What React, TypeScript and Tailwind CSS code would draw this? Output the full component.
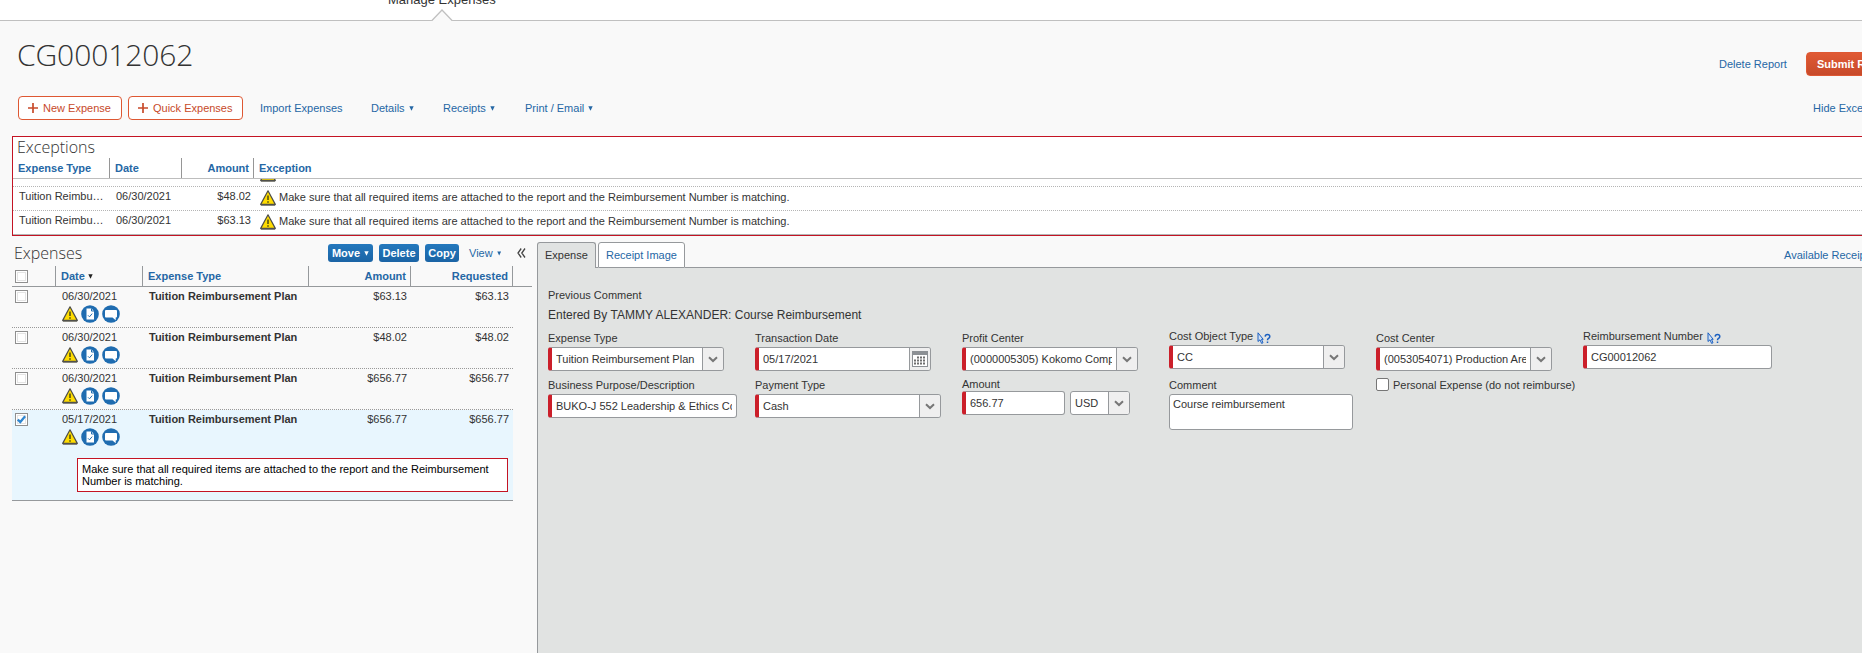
import type { ReactNode } from "react";

const expenses = [
    { id: 1, date: "06/30/2021", type: "Tuition Reimbursement Plan", amount: "$63.13", requested: "$63.13", checked: false },
    { id: 2, date: "06/30/2021", type: "Tuition Reimbursement Plan", amount: "$48.02", requested: "$48.02", checked: false },
    { id: 3, date: "06/30/2021", type: "Tuition Reimbursement Plan", amount: "$656.77", requested: "$656.77", checked: false },
    { id: 4, date: "05/17/2021", type: "Tuition Reimbursement Plan", amount: "$656.77", requested: "$656.77", checked: true },
]

const exceptions = [
    { id: 1, type: "Tuition Reimbu…", date: "06/30/2021", amount: "$48.02" },
    { id: 2, type: "Tuition Reimbu…", date: "06/30/2021", amount: "$63.13" },
]

const message = "Make sure that all required items are attached to the report and the Reimbursement Number is matching."

function WarningIcon() {
    return (
        <svg className="block h-4 w-4 shrink-0" viewBox="0 0 16 16">
            <path d="M8 .8 15.3 14.4H.7Z" fill="#ffdc00" stroke="#4d4d48" strokeWidth="1.2" strokeLinejoin="round" />
            <path d="M.8 15.4H15.2" stroke="#77776f" strokeWidth="1" />
            <path d="M8 5.5V10M8 11.2V12.8" stroke="#4a4a10" strokeWidth="1.5" />
        </svg>
    )
}

function ReceiptIcon() {
    return (
        <svg className="block h-[18px] w-[18px]" viewBox="0 0 18 18">
            <circle cx="9" cy="9" r="8.8" fill="#1f6cb0" />
            <path d="M5.5 3.5H10.5L13 6V14.5H5.5Z" fill="#fff" />
            <path d="M10.5 3.5V6H13" fill="none" stroke="#1f6cb0" strokeWidth="1" />
            <path d="M7 10.3 8.5 11.8 11.2 8.6" fill="none" stroke="#1f6cb0" strokeWidth="1" />
        </svg>
    )
}

function CommentIcon() {
    return (
        <svg className="block h-[18px] w-[18px]" viewBox="0 0 18 18">
            <circle cx="9" cy="9" r="8.8" fill="#1f6cb0" />
            <path d="M4 5H14Q15 5 15 6V11.5Q15 12.5 14 12.5H13.7V15.2L10.5 12.5H4Q3 12.5 3 11.5V6Q3 5 4 5Z" fill="#fff" />
        </svg>
    )
}

function HelpIcon() {
    return (
        <svg className="block h-3 w-[14px]" viewBox="0 0 14 12">
            <path d="M1 .8V9.5L3 7.8 4.6 11.4 6 10.8 4.5 7.3H6.2Z" fill="#cfe0f5" stroke="#1a5fc0" strokeWidth="1" />
            <path d="M8.2 4.6Q8.3 2.5 10.5 2.5T12.8 4.5Q12.8 5.6 11.6 6.3T10.5 8.2M10.5 9.4V11" fill="none" stroke="#1a5fc0" strokeWidth="1.5" />
        </svg>
    )
}

function CalendarIcon() {
    return (
        <svg className="block h-4 w-4" viewBox="0 0 16 16">
            <rect x=".5" y=".5" width="15" height="15" fill="#fff" stroke="#8c9094" />
            <rect x="1" y="1" width="14" height="3" fill="#8c9094" />
            <path d="M5 6.5H14M2 9.5H14M2 12.5H14" stroke="#6e6e6e" strokeWidth="2" strokeDasharray="2 1" />
        </svg>
    )
}

function Arrow({ className = "" }: { className?: string }) {
    return (
        <svg className={`block h-[5px] w-[5px] ${className}`} viewBox="0 0 5 5">
            <path d="M.3 .2H4.7L2.5 4.8Z" fill="currentColor" />
        </svg>
    )
}

function Chevron() {
    return (
        <svg className="block h-[7px] w-[10px]" viewBox="0 0 10 7">
            <path d="M1 1.2 5 5 9 1.2" fill="none" stroke="#777" strokeWidth="2" />
        </svg>
    )
}

function PlusIcon() {
    return (
        <svg className="block h-[10px] w-[10px]" viewBox="0 0 10 10">
            <path d="M5 0V10M0 5H10" stroke="currentColor" strokeWidth="1.7" />
        </svg>
    )
}

function Checkbox({ checked = false }: { checked?: boolean }) {
    return (
        <span className="flex h-[13px] w-[13px] items-center justify-center border border-[#8f8f8f] bg-white">
            <span className="flex h-[9px] w-[9px] items-center justify-center border border-[#e4e4e4]">
                {checked && (
                    <svg className="h-[9px] w-[9px] shrink-0" viewBox="0 0 9 9">
                        <path d="M.8 4.5 3.3 7 8.2 1.2" fill="none" stroke="#2f86d0" strokeWidth="2.4" />
                    </svg>
                )}
            </span>
        </span>
    )
}

type InputProps = { value: string; width: string; required?: boolean; button?: ReactNode }

function Input({ value, width, required = true, button }: InputProps) {
    return (
        <div className={`flex h-6 overflow-hidden rounded-[3px] border border-[#96999c] bg-white ${required ? "border-l-4 border-l-[#cb1f2a]" : ""} ${width}`}>
            <div className="mx-1 min-w-0 flex-1 overflow-hidden leading-[22px] whitespace-nowrap">{value}</div>
            {button && (
                <div className="flex w-[21px] shrink-0 items-center justify-center border-l border-[#96999c] bg-[#efefef]">{button}</div>
            )}
        </div>
    )
}

function Field({ label, help, children }: { label: string; help?: boolean; children: ReactNode }) {
    return (
        <div className={`w-[207px] shrink-0 ${help ? "-mt-0.5" : ""}`}>
            <div className="flex h-4 gap-1 leading-[14px]">
                {label}
                {help && <span className="pt-[3px]"><HelpIcon /></span>}
            </div>
            {children}
        </div>
    )
}

function Exceptions() {
    return (
        <section className="ml-3 h-[100px] overflow-hidden border border-r-0 border-[#c41424] bg-white">
            <h2 className="h-[21px] pl-1 font-['Open_Sans',sans-serif] text-base leading-[20px] font-light">Exceptions</h2>
            <div className="flex h-[21px] border-b border-[#bdbdbd] leading-[20px] font-bold text-[#2567a5]">
                <div className="w-[97px] border-r border-[#969696] pl-[5px]">Expense Type</div>
                <div className="w-[72px] border-r border-[#969696] pl-[5px]">Date</div>
                <div className="w-[72px] border-r border-[#969696] pr-1 text-right">Amount</div>
                <div className="pl-[5px]">Exception</div>
            </div>
            <div className="flex h-2 items-start overflow-hidden border-b border-dotted border-[#b5b5b5] pl-[247px]">
                <div className="-mt-[13px]"><WarningIcon /></div>
            </div>
            {exceptions.map((item) => (
                <div key={item.id} className="flex h-6 border-b border-dotted border-[#b5b5b5] leading-[18px] whitespace-nowrap last:border-solid">
                    <div className="w-[97px] pl-[6px]">{item.type}</div>
                    <div className="w-[72px] pl-[6px]">{item.date}</div>
                    <div className="w-[72px] pr-[3px] text-right">{item.amount}</div>
                    <div className="flex gap-[3px] pt-[3px] pl-1.5">
                        <WarningIcon />
                        <span className="leading-[14px]">{message}</span>
                    </div>
                </div>
            ))}
        </section>
    )
}

function ExpenseList() {
    return (
        <section className="w-[537px] shrink-0 pl-3">
            <div className="flex h-[30px] pt-2">
                <h2 className="w-[316px] pl-0.5 font-['Open_Sans',sans-serif] text-base leading-[19px] font-light">Expenses</h2>
                <div className="flex h-[18px] gap-1.5 leading-[18px] font-bold text-white">
                    <button className="flex w-[45px] items-center justify-center gap-1 rounded-[3px] bg-linear-to-b from-[#2478bd] to-[#1b64a5]">Move<Arrow /></button>
                    <button className="w-10 rounded-[3px] bg-linear-to-b from-[#2478bd] to-[#1b64a5]">Delete</button>
                    <button className="w-[34px] rounded-[3px] bg-linear-to-b from-[#2478bd] to-[#1b64a5]">Copy</button>
                </div>
                <div className="ml-2.5 flex h-[18px] w-8 items-center gap-1 text-[#2567a5]">View<Arrow /></div>
                <svg className="mt-1 ml-4 h-[10px] w-[9px]" viewBox="0 0 9 10">
                    <path d="M4.2.5 1 5 4.2 9.5M8 .5 4.8 5 8 9.5" fill="none" stroke="#444" strokeWidth="1.3" />
                </svg>
            </div>
            <div className="flex h-[21px] w-[520px] border-b border-[#96999c] leading-[20px] font-bold text-[#2567a5]">
                <div className="w-11 border-r border-[#96999c] pt-1 pl-[3px]"><Checkbox /></div>
                <div className="flex w-[87px] items-center gap-[3px] border-r border-[#96999c] pl-[5px]">Date<Arrow className="text-[#222]" /></div>
                <div className="w-[166px] border-r border-[#96999c] pl-[5px]">Expense Type</div>
                <div className="w-[102px] border-r border-[#96999c] pr-1 text-right">Amount</div>
                <div className="w-[102px] border-r border-[#96999c] pr-1 text-right">Requested</div>
            </div>
            {expenses.map((item) => (
                <div key={item.id} className={`w-[501px] border-b ${item.checked ? "h-[91px] border-[#96999c] bg-[#e8f6fe]" : "h-[41px] border-dotted border-[#999]"}`}>
                    <div className="flex pt-[3px] leading-[14px]">
                        <div className="w-[50px] pl-[3px]"><Checkbox checked={item.checked} /></div>
                        <div className="w-[87px]">
                            <div className="-mt-px">{item.date}</div>
                            <div className="mt-[2px] flex items-center gap-[3px]">
                                <WarningIcon />
                                <ReceiptIcon />
                                <CommentIcon />
                            </div>
                        </div>
                        <div className="-mt-px w-[156px] font-bold whitespace-nowrap">{item.type}</div>
                        <div className="-mt-px w-[102px] text-right">{item.amount}</div>
                        <div className="-mt-px w-[102px] text-right">{item.requested}</div>
                    </div>
                    {item.checked && (
                        <div className="mt-3 ml-[65px] h-[34px] w-[431px] border border-[#c41424] bg-white px-1 pt-1 leading-3 text-black">{message}</div>
                    )}
                </div>
            ))}
        </section>
    )
}

function ExpenseForm() {
    return (
        <section className="flex min-w-0 flex-1 flex-col">
            <div className="flex pt-1.5 leading-[25px] whitespace-nowrap">
                <div className="h-[26px] w-[59px] rounded-t-[3px] border border-b-0 border-[#96999c] bg-[#e1e3e2] pl-[7px]">Expense</div>
                <div className="w-0.5 border-b border-[#96999c]" />
                <div className="h-[26px] w-[87px] rounded-t-[3px] border border-[#96999c] bg-white pl-[7px] text-[#2567a5]">Receipt Image</div>
                <div className="h-[26px] min-w-0 flex-1 overflow-hidden border-b border-[#96999c] pl-[1099px] leading-[27px] text-[#2567a5]">Available Receipts</div>
            </div>
            <div className="flex-1 border-l border-[#96999c] bg-[#e1e3e2] pt-5 pl-2.5">
                <div className="leading-[14px]">Previous Comment</div>
                <div className="mt-[5px] text-xs leading-4">Entered By TAMMY ALEXANDER: Course Reimbursement</div>
                <div className="mt-2 flex h-[47px] items-start">
                    <Field label="Expense Type"><Input value="Tuition Reimbursement Plan" width="w-[176px]" button={<Chevron />} /></Field>
                    <Field label="Transaction Date"><Input value="05/17/2021" width="w-[176px]" button={<CalendarIcon />} /></Field>
                    <Field label="Profit Center"><Input value="(0000005305) Kokomo Company" width="w-[176px]" button={<Chevron />} /></Field>
                    <Field label="Cost Object Type" help><Input value="CC" width="w-[176px]" button={<Chevron />} /></Field>
                    <Field label="Cost Center"><Input value="(0053054071) Production Area" width="w-[176px]" button={<Chevron />} /></Field>
                    <Field label="Reimbursement Number" help><Input value="CG00012062" width="w-[189px]" /></Field>
                </div>
                <div className="flex items-start">
                    <Field label="Business Purpose/Description"><Input value="BUKO-J 552 Leadership & Ethics Course" width="w-[189px]" /></Field>
                    <Field label="Payment Type"><Input value="Cash" width="w-[186px]" button={<Chevron />} /></Field>
                    <div className="-mt-px w-[207px] shrink-0">
                        <div className="h-[14px] leading-[14px]">Amount</div>
                        <div className="flex gap-[5px]">
                            <Input value="656.77" width="w-[103px]" />
                            <Input value="USD" width="w-[60px]" required={false} button={<Chevron />} />
                        </div>
                    </div>
                    <Field label="Comment">
                        <div className="h-9 w-[184px] rounded-[3px] border border-[#96999c] bg-white pt-0.5 pl-[3px] leading-[14px]">Course reimbursement</div>
                    </Field>
                    <div className="flex gap-1 leading-[14px]">
                        <span className="h-[13px] w-[13px] rounded-[2px] border border-[#767676] bg-white" />
                        Personal Expense (do not reimburse)
                    </div>
                </div>
            </div>
        </section>
    )
}

export default function App() {
    return (
        <div className="flex h-[653px] w-full flex-col overflow-hidden bg-[#f9f9f9] font-['Liberation_Sans',Arial,sans-serif] text-[11px] text-[#333]">
            <header className="relative h-[21px] shrink-0 border-b border-[#c0c0c0] bg-white pl-[388px] text-[13px] leading-4">
                <div className="-mt-2">Manage Expenses</div>
                <svg className="absolute top-[9px] left-[431px] h-3 w-[22px]" viewBox="0 0 22 12">
                    <path d="M.5 12 11 1 21.5 12" fill="#f9f9f9" stroke="#c0c0c0" strokeWidth="1.3" />
                </svg>
            </header>

            <div className="flex h-[75px] shrink-0 items-start justify-between pl-[17px]">
                <h1 className="mt-[14px] font-['Open_Sans',sans-serif] text-[30px] leading-[40px] font-light tracking-[-0.1px]">CG00012062</h1>
                <div className="mt-[31px] flex w-[143px] items-center overflow-hidden whitespace-nowrap text-[#2567a5]">
                    <span className="w-[87px] shrink-0">Delete Report</span>
                    <button className="h-6 w-[110px] shrink-0 rounded-[4px] border border-[#de5833] bg-linear-to-b from-[#e05a34] to-[#c74a2a] pl-2.5 text-left font-bold text-white">Submit Report</button>
                </div>
            </div>

            <nav className="flex h-10 shrink-0 items-start pl-[18px] leading-6 text-[#2567a5]">
                <button className="flex h-6 w-[104px] items-center gap-[5px] rounded-[4px] border border-[#de5833] bg-white pl-[9px] text-[#c74a2a]">
                    <PlusIcon />
                    New Expense
                </button>
                <button className="ml-1.5 flex h-6 w-[115px] items-center gap-[5px] rounded-[4px] border border-[#de5833] bg-white pl-[9px] text-[#c74a2a]">
                    <PlusIcon />
                    Quick Expenses
                </button>
                <span className="ml-[17px] w-[111px]">Import Expenses</span>
                <span className="flex w-[72px] items-center gap-1">Details<Arrow /></span>
                <span className="flex w-[82px] items-center gap-1">Receipts<Arrow /></span>
                <span className="flex items-center gap-1">Print / Email<Arrow /></span>
                <span className="ml-auto w-[49px] overflow-hidden whitespace-nowrap">Hide Exceptions</span>
            </nav>

            <Exceptions />

            <div className="flex min-h-0 flex-1">
                <ExpenseList />
                <ExpenseForm />
            </div>
        </div>
    )
}
